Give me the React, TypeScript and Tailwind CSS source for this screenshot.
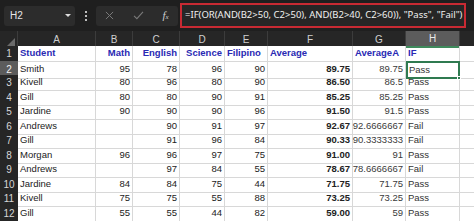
const cols = "grid grid-cols-[18px_78px_37px_47px_45px_43px_85px_53px_54px_1fr]";

type Row = [string, string, string, string, string, string, string, string];

const rows: Row[] = [
  ["Smith", "95", "78", "96", "90", "89.75", "89.75", "Pass"],
  ["Kivell", "80", "96", "80", "90", "86.50", "86.5", "Pass"],
  ["Gill", "80", "80", "90", "91", "85.25", "85.25", "Pass"],
  ["Jardine", "90", "90", "90", "96", "91.50", "91.5", "Pass"],
  ["Andrews", "", "90", "91", "97", "92.67", "92.6666667", "Fail"],
  ["Gill", "", "91", "96", "84", "90.33", "90.3333333", "Fail"],
  ["Morgan", "96", "96", "97", "75", "91.00", "91", "Pass"],
  ["Andrews", "", "97", "84", "55", "78.67", "78.6666667", "Fail"],
  ["Jardine", "84", "84", "75", "44", "71.75", "71.75", "Pass"],
  ["Kivell", "75", "75", "55", "88", "73.25", "73.25", "Pass"],
  ["Gill", "55", "55", "44", "82", "59.00", "59", "Pass"],
];

const letters = ["A", "B", "C", "D", "E", "F", "G", "H"];

function TopBar() {
  return (
    <div className="h-[31px] bg-[#1f1f1f] flex items-center pl-[4px] pr-[8px]">
      <div className="w-[71px] h-[20px] bg-[#2c2c2c] rounded-[3px] flex items-center justify-between pl-[6px] pr-[4px]">
        <span className="text-[10px] text-[#e6e6e6]">H2</span>
        <span className="w-0 h-0 border-l-[3px] border-r-[3px] border-t-[3px] border-l-transparent border-r-transparent border-t-[#dcdcdc]" />
      </div>
      <div className="w-[21px] flex flex-col items-center gap-[2px]">
        <span className="w-[2px] h-[2px] bg-[#bdbdbd]" />
        <span className="w-[2px] h-[2px] bg-[#bdbdbd]" />
        <span className="w-[2px] h-[2px] bg-[#bdbdbd]" />
      </div>
      <div className="w-[82px] h-[20px] bg-[#2c2c2c] rounded-[3px] flex items-center justify-around text-[#7a7a7a]">
        <svg width="9" height="9" viewBox="0 0 10 10" stroke="currentColor" strokeWidth="1.1">
          <path d="M1 1L9 9M9 1L1 9" />
        </svg>
        <svg width="11" height="9" viewBox="0 0 12 10" fill="none" stroke="currentColor" strokeWidth="1.2">
          <path d="M1 5.5L4.2 8.5L11 1" />
        </svg>
        <span className="text-[#d0d0d0] text-[11px] italic font-['Liberation_Serif',serif] leading-none">
          f<span className="text-[7px]">x</span>
        </span>
      </div>
      <div className="ml-[2px] flex-1 h-[25px] border-2 border-[#c82a33] bg-[#262626] flex items-center pl-[3px] overflow-hidden">
        <span className="text-[9.5px] text-[#f0f0f0] whitespace-nowrap font-['Noto_Sans',sans-serif]">
          =IF(OR(AND(B2&gt;50, C2&gt;50), AND(B2&gt;40, C2&gt;60)), "Pass", "Fail")
        </span>
      </div>
    </div>
  );
}

function HeaderRow() {
  return (
    <div className={`${cols} h-[15px] bg-[#262626] text-[10px] text-[#cfcfcf]`}>
      <div className="border-r border-[#3c3c3c] flex items-end justify-end pr-[2px] pb-[2px]">
        <svg width="8" height="8" viewBox="0 0 8 8">
          <path d="M8 0V8H0Z" fill="#6a6a6a" />
        </svg>
      </div>
      {letters.map((l) => (
        <div
          key={l}
          className={
            l === "H"
              ? "bg-[#5c5c5c] border-b-2 border-[#3f8a5c] border-r border-r-[#3c3c3c] flex items-center justify-center text-[#e8e8e8]"
              : "border-r border-[#3c3c3c] flex items-center justify-center"
          }
        >
          {l}
        </div>
      ))}
      <div />
    </div>
  );
}

function Cell({ children, className = "" }: { children?: React.ReactNode; className?: string }) {
  return (
    <div className={`border-r border-b border-[#d8d8d8] flex items-center px-[2px] whitespace-nowrap ${className}`}>
      {children}
    </div>
  );
}

export default function App() {
  return (
    <div className="w-[474px] h-[221px] overflow-hidden bg-white font-['Liberation_Sans',Arial,sans-serif]">
      <TopBar />
      <HeaderRow />
      <div className={`${cols} h-[14.5px] text-[9.5px] font-bold text-[#2929b3]`}>
        <div className="bg-[#262626] text-[#d6d6d6] font-normal text-[10px] flex items-center justify-center border-b border-[#3c3c3c]">1</div>
        <Cell>Student</Cell>
        <Cell className="justify-end">Math</Cell>
        <Cell className="justify-end">English</Cell>
        <Cell className="justify-end">Science</Cell>
        <Cell>Filipino</Cell>
        <Cell>Average</Cell>
        <Cell>AverageA</Cell>
        <Cell>IF</Cell>
        <div className="border-b border-[#d8d8d8]" />
      </div>
      {rows.map((r, i) => (
        <div key={i} className={`${cols} h-[14.5px] text-[9.5px] text-[#222]`}>
          <div
            className={`${i === 0 ? "bg-[#5c5c5c] text-[#f0f0f0]" : "bg-[#262626] text-[#d6d6d6]"} text-[10px] flex items-center justify-center border-b border-[#3c3c3c]`}
          >
            {i + 2}
          </div>
          <Cell>{r[0]}</Cell>
          <Cell className="justify-end">{r[1]}</Cell>
          <Cell className="justify-end">{r[2]}</Cell>
          <Cell className="justify-end">{r[3]}</Cell>
          <Cell className="justify-end">{r[4]}</Cell>
          <Cell className="justify-end font-bold">{r[5]}</Cell>
          <Cell className="justify-end text-[#3a3a3a]">{r[6]}</Cell>
          {i === 0 ? (
            <div className="relative border-2 border-[#2f7a50] flex items-center px-[1px] text-[#333]">
              {r[7]}
              <span className="absolute -right-[3px] -bottom-[3px] w-[4px] h-[4px] bg-[#2f7a50] border border-white" />
            </div>
          ) : (
            <Cell className="text-[#333]">{r[7]}</Cell>
          )}
          <div className="border-b border-[#d8d8d8]" />
        </div>
      ))}
    </div>
  );
}
